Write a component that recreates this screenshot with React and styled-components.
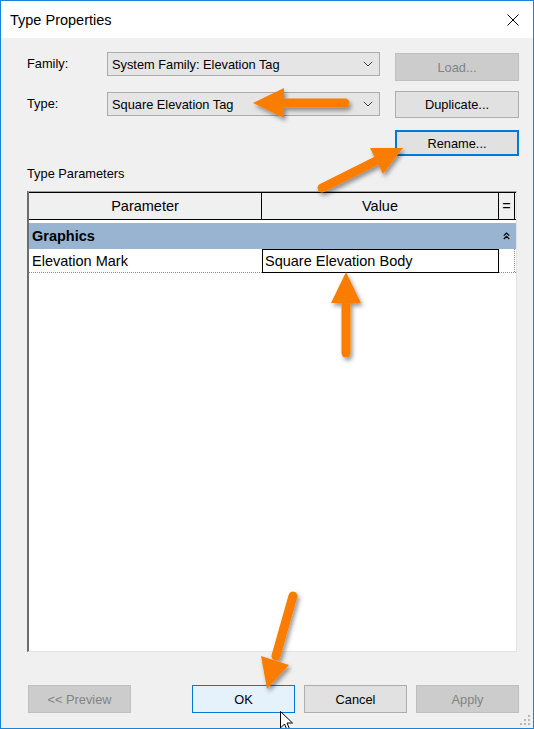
import styled, { createGlobalStyle } from "styled-components";

const GlobalStyle = createGlobalStyle`
  html, body { margin: 0; padding: 0; background: #fff; }
  body { font-family: "Liberation Sans", Arial, sans-serif; color: #000; }
  * { box-sizing: border-box; }
`;

const Window = styled.div`
  position: relative;
  width: 534px;
  height: 729px;
  border: 1px solid #1883d7;
  background: #f0f0f0;
  display: flex;
  flex-direction: column;
  overflow: hidden;
`;

const TitleBar = styled.div`
  height: 37px;
  background: #fff;
  display: flex;
  align-items: center;
  justify-content: space-between;
  padding: 0 14px 0 9px;
`;

const Title = styled.span`
  font-size: 14.5px;
`;

const Body = styled.div`
  display: flex;
  flex-direction: column;
  padding: 14px 14px 0 26px;
`;

const FormRow = styled.div`
  display: grid;
  grid-template-columns: 65px 273px 124px;
  column-gap: 15px;
  align-items: start;
  height: ${(p) => p.$h}px;
  margin-top: ${(p) => p.$mt || 0}px;
`;

const Label = styled.div`
  font-size: 12.8px;
  height: 24px;
  line-height: 24px;
  margin-top: ${(p) => p.$mt || 0}px;
`;

const Select = styled.div`
  height: 24px;
  margin-top: ${(p) => p.$mt || 0}px;
  background: #e5e5e5;
  border: 1px solid #acacac;
  display: flex;
  align-items: center;
  justify-content: space-between;
  padding: 0 6px 0 4px;
  font-size: 12.8px;
`;

const Button = styled.div`
  grid-column: ${(p) => p.$col || "auto"};
  width: ${(p) => p.$w || "auto"};
  height: ${(p) => p.$h || 27}px;
  margin-top: ${(p) => p.$mt || 0}px;
  display: flex;
  align-items: center;
  justify-content: center;
  font-size: 12.8px;
  color: ${(p) => (p.$variant === "disabled" ? "#838383" : "#000")};
  background: ${(p) =>
    p.$variant === "disabled"
      ? "#cccccc"
      : p.$variant === "default"
      ? "#e5f1fb"
      : "#e1e1e1"};
  border: ${(p) =>
    p.$variant === "focus"
      ? "2px solid #0078d7"
      : p.$variant === "default"
      ? "1px solid #0078d7"
      : p.$variant === "disabled"
      ? "1px solid #bfbfbf"
      : "1px solid #adadad"};
`;

const SectionLabel = styled.div`
  margin-top: 10px;
  font-size: 12.8px;
  line-height: 16px;
`;

const Grid = styled.div`
  margin-top: 9px;
  width: 490px;
  height: 461px;
  background: #fff;
  border-style: solid;
  border-width: 1px 1px 1px 2px;
  border-color: #a0a0a0 #e3e3e3 #e3e3e3 #6d6d6d;
  display: flex;
  flex-direction: column;
`;

const columns = "233px 237px 16px";

const HeaderRow = styled.div`
  display: grid;
  grid-template-columns: ${columns};
  height: 28px;
  background: #f0f0f0;
  border-top: 1px solid #000;
  border-bottom: 1px solid #000;
`;

const HeaderCell = styled.div`
  display: flex;
  align-items: center;
  justify-content: center;
  font-size: 14.5px;
  border-right: 1px solid #000;
`;

const GroupRow = styled.div`
  margin-top: 3px;
  width: 487px;
  height: 26px;
  background: #99b4d1;
  display: flex;
  align-items: center;
  justify-content: space-between;
  padding: 0 6px 0 3px;
  font-size: 14.5px;
  font-weight: bold;
`;

const DataRow = styled.div`
  display: grid;
  grid-template-columns: ${columns};
  height: 24px;
  border-bottom: 1px dotted #8c8c8c;
`;

const DataCell = styled.div`
  display: flex;
  align-items: center;
  font-size: 14.5px;
  padding-left: ${(p) => (p.$editing ? 2 : 3)}px;
  height: ${(p) => (p.$editing ? 24 : 23)}px;
  border: ${(p) => (p.$editing ? "1px solid #000" : "none")};
  border-right: ${(p) => (p.$last ? "1px dotted #8c8c8c" : undefined)};
`;

const Footer = styled.div`
  margin-top: 33px;
  display: flex;
  align-items: center;
  gap: 9px;
  padding-left: 1px;
`;

const Spacer = styled.div`
  flex: 1;
`;

const Overlay = styled.svg`
  position: absolute;
  left: -1px;
  top: -1px;
  width: 534px;
  height: 729px;
  pointer-events: none;
`;

const SizeGrip = styled.svg`
  position: absolute;
  right: 2px;
  bottom: 2px;
  width: 11px;
  height: 11px;
`;

function Chevron() {
  return (
    <svg width="10" height="6" viewBox="0 0 10 6">
      <path d="M0.8 0.8 L5 5 L9.2 0.8" fill="none" stroke="#444" strokeWidth="1" />
    </svg>
  );
}

function CollapseIcon() {
  return (
    <svg width="7" height="8" viewBox="0 0 7 8">
      <path d="M0.8 3.6 L3.5 1 L6.2 3.6 M0.8 7 L3.5 4.4 L6.2 7" fill="none" stroke="#000" strokeWidth="1.2" />
    </svg>
  );
}

function CloseIcon() {
  return (
    <svg width="12" height="12" viewBox="0 0 12 12">
      <path d="M0.5 0.5 L11.5 11.5 M11.5 0.5 L0.5 11.5" stroke="#000" strokeWidth="1" />
    </svg>
  );
}

function Arrow({ tail, end, head }) {
  return (
    <g>
      <line
        x1={tail[0]}
        y1={tail[1]}
        x2={end[0]}
        y2={end[1]}
        stroke="#fb7d05"
        strokeWidth="9"
        strokeLinecap="round"
      />
      <polygon points={head} fill="#fb7d05" />
    </g>
  );
}

export default function App() {
  return (
    <>
      <GlobalStyle />
      <Window>
        <TitleBar>
          <Title>Type Properties</Title>
          <CloseIcon />
        </TitleBar>

        <Body>
          <FormRow $h={29}>
            <Label>Family:</Label>
            <Select>
              System Family: Elevation Tag
              <Chevron />
            </Select>
            <Button $h={28} $mt={1} $variant="disabled">
              Load...
            </Button>
          </FormRow>

          <FormRow $h={27} $mt={10}>
            <Label $mt={1}>Type:</Label>
            <Select $mt={1}>
              Square Elevation Tag
              <Chevron />
            </Select>
            <Button $h={27}>Duplicate...</Button>
          </FormRow>

          <FormRow $h={26} $mt={12}>
            <Button $col={3} $h={26} $variant="focus">
              Rename...
            </Button>
          </FormRow>

          <SectionLabel>Type Parameters</SectionLabel>

          <Grid>
            <HeaderRow>
              <HeaderCell>Parameter</HeaderCell>
              <HeaderCell>Value</HeaderCell>
              <HeaderCell>=</HeaderCell>
            </HeaderRow>
            <GroupRow>
              Graphics
              <CollapseIcon />
            </GroupRow>
            <DataRow>
              <DataCell>Elevation Mark</DataCell>
              <DataCell $editing>Square Elevation Body</DataCell>
              <DataCell $last />
            </DataRow>
          </Grid>

          <Footer>
            <Button $w="103px" $h={28} $variant="disabled">
              &lt;&lt; Preview
            </Button>
            <Spacer />
            <Button $w="103px" $h={28} $variant="default">
              OK
            </Button>
            <Button $w="103px" $h={28}>
              Cancel
            </Button>
            <Button $w="103px" $h={28} $variant="disabled">
              Apply
            </Button>
          </Footer>
        </Body>

        <SizeGrip viewBox="0 0 11 11">
          <g fill="#b8b8b8">
            <rect x="8" y="0" width="2" height="2" />
            <rect x="4" y="4" width="2" height="2" />
            <rect x="8" y="4" width="2" height="2" />
            <rect x="0" y="8" width="2" height="2" />
            <rect x="4" y="8" width="2" height="2" />
            <rect x="8" y="8" width="2" height="2" />
          </g>
        </SizeGrip>

        <Overlay viewBox="0 0 534 729">
          <defs>
            <filter id="shadow" x="-20%" y="-20%" width="140%" height="140%">
              <feDropShadow dx="2" dy="3" stdDeviation="2.2" floodColor="#000" floodOpacity="0.4" />
            </filter>
          </defs>
          <g filter="url(#shadow)">
            <Arrow tail={[345, 103]} end={[280, 103]} head="253,103 284,88 284,118" />
            <Arrow tail={[322, 188]} end={[378, 160]} head="403,148 370,148 383,174" />
            <Arrow tail={[346, 353]} end={[346, 300]} head="346,272 331,303 361,303" />
            <Arrow tail={[293, 596]} end={[276, 656]} head="267,689 261,656 289,665" />
          </g>
          <path
            d="M280.5 711.5 L280.5 728 L284.5 724 L287.5 731 L290 730 L287 723 L292.5 723 Z"
            fill="#fff"
            stroke="#000"
            strokeWidth="1"
            strokeLinejoin="round"
          />
        </Overlay>
      </Window>
    </>
  );
}
